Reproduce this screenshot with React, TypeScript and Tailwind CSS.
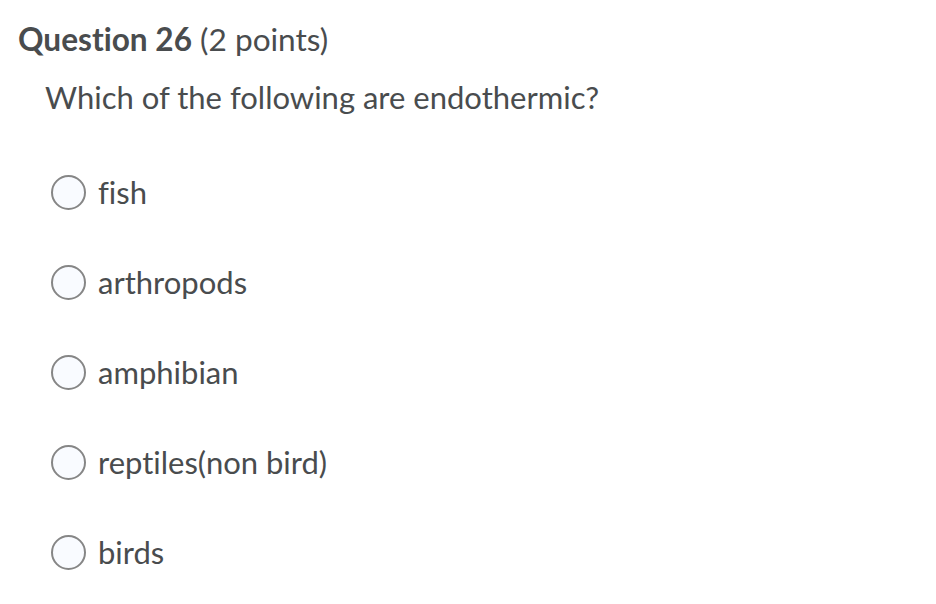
import React, { useState } from 'react';

const options = ['fish', 'arthropods', 'amphibian', 'reptiles(non bird)', 'birds'];

export default function App() {
  const [selected, setSelected] = useState<string | null>(null);

  return (
    <div
      className="w-[936px] h-[604px] bg-white text-[#494c4e] overflow-hidden [font-variant-ligatures:none]"
      style={{ fontFamily: 'Lato, "Open Sans", sans-serif' }}
    >
      <div className="pl-[18px] pt-[19px]">
        <h2 className="text-[31.6px] leading-[40px]">
          <span className="font-bold">Question 26</span> (2 points)
        </h2>
      </div>

      <div className="pl-[45px] pt-[18px]">
        <p className="text-[31px] leading-[40px]">Which of the following are endothermic?</p>

        <div className="mt-[57px] flex flex-col gap-[54px]">
          {options.map((opt) => (
            <label key={opt} className="flex items-center h-[36px] cursor-pointer">
              <button
                type="button"
                onClick={() => setSelected(opt)}
                className="ml-[6px] w-[35px] h-[35px] rounded-full border-2 border-[#868686] bg-[#f9fbff] flex items-center justify-center"
              >
                {selected === opt && <span className="w-[17px] h-[17px] rounded-full bg-[#494c4e]" />}
              </button>
              <span className="ml-[12px] text-[31px] leading-[36px]">{opt}</span>
            </label>
          ))}
        </div>
      </div>
    </div>
  );
}
